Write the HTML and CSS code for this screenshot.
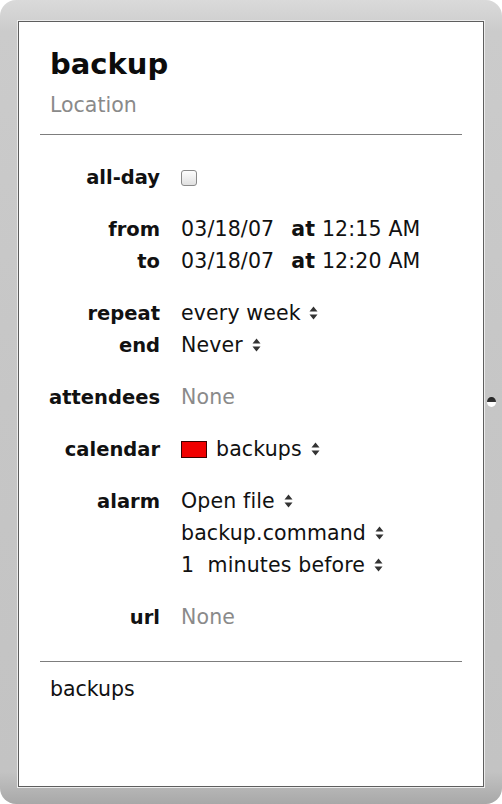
FILE: index.html
```html
<!DOCTYPE html>
<html>
<head>
<meta charset="utf-8">
<link rel="stylesheet" href="styles.css">
</head>
<body>
<div class="frame">
  <div class="panel">
    <div class="head">
      <div class="title">backup</div>
      <div class="location">Location</div>
    </div>
    <div class="rule"></div>
    <div class="form">
      <div class="group">
        <div class="row"><span class="label">all-day</span><span class="value"><span class="check"></span></span></div>
      </div>
      <div class="group">
        <div class="row"><span class="label">from</span><span class="value">03/18/07<span class="gap"></span><b>at</b> 12:15 AM</span></div>
        <div class="row"><span class="label">to</span><span class="value">03/18/07<span class="gap"></span><b>at</b> 12:20 AM</span></div>
      </div>
      <div class="group">
        <div class="row"><span class="label">repeat</span><span class="value">every week <svg class="ud" viewBox="0 0 9 14"><path d="M4.5 0.5 L8.5 5.5 L0.5 5.5 Z M4.5 13.5 L8.5 8.5 L0.5 8.5 Z"/></svg></span></div>
        <div class="row"><span class="label">end</span><span class="value">Never <svg class="ud" viewBox="0 0 9 14"><path d="M4.5 0.5 L8.5 5.5 L0.5 5.5 Z M4.5 13.5 L8.5 8.5 L0.5 8.5 Z"/></svg></span></div>
      </div>
      <div class="group">
        <div class="row"><span class="label">attendees</span><span class="value muted">None</span></div>
      </div>
      <div class="group">
        <div class="row"><span class="label">calendar</span><span class="value"><span class="swatch"></span>backups <svg class="ud" viewBox="0 0 9 14"><path d="M4.5 0.5 L8.5 5.5 L0.5 5.5 Z M4.5 13.5 L8.5 8.5 L0.5 8.5 Z"/></svg></span></div>
      </div>
      <div class="group">
        <div class="row"><span class="label">alarm</span><span class="value">Open file <svg class="ud" viewBox="0 0 9 14"><path d="M4.5 0.5 L8.5 5.5 L0.5 5.5 Z M4.5 13.5 L8.5 8.5 L0.5 8.5 Z"/></svg></span></div>
        <div class="row"><span class="label"></span><span class="value">backup.command <svg class="ud" viewBox="0 0 9 14"><path d="M4.5 0.5 L8.5 5.5 L0.5 5.5 Z M4.5 13.5 L8.5 8.5 L0.5 8.5 Z"/></svg></span></div>
        <div class="row"><span class="label"></span><span class="value">1&nbsp; minutes before <svg class="ud" viewBox="0 0 9 14"><path d="M4.5 0.5 L8.5 5.5 L0.5 5.5 Z M4.5 13.5 L8.5 8.5 L0.5 8.5 Z"/></svg></span></div>
      </div>
      <div class="group">
        <div class="row"><span class="label">url</span><span class="value muted">None</span></div>
      </div>
    </div>
    <div class="rule rule-bottom"></div>
    <div class="notes">backups</div>
  </div>
  <div class="knob"></div>
</div>
</body>
</html>
```

FILE: styles.css
```css
html, body {
  margin: 0;
  padding: 0;
  background: #ffffff;
}

body {
  font-family: "DejaVu Sans", "Liberation Sans", sans-serif;
  color: #111;
}

.frame {
  position: relative;
  box-sizing: border-box;
  width: 502px;
  height: 804px;
  border-radius: 16px;
  background: linear-gradient(to bottom, #dadada 0%, #cbcbcb 4%, #c6c6c6 50%, #c3c3c3 96%, #a8a8a8 100%);
  padding: 21px 18px 17px 18px;
  display: flex;
}

.panel {
  flex: 1;
  background: #fff;
  border: 1px solid #5e5e5e;
  box-shadow: 0 0 0 1px #ececec;
  display: flex;
  flex-direction: column;
}

.head {
  padding: 24px 0 0 31px;
}

.title {
  font-size: 29px;
  font-weight: bold;
  line-height: 36px;
  color: #0c0c0c;
}

.location {
  margin-top: 11px;
  font-size: 20.5px;
  line-height: 24px;
  color: #8a8a8a;
}

.rule {
  height: 1px;
  background: #7d7d7d;
  margin: 17px 21px 0 21px;
}

.form {
  padding-top: 26px;
  display: flex;
  flex-direction: column;
  gap: 20px;
}

.row {
  display: grid;
  grid-template-columns: 141px 1fr;
  column-gap: 21px;
  height: 32px;
  align-items: center;
  font-size: 20.5px;
}

.label {
  text-align: right;
  font-weight: bold;
  font-size: 19.5px;
  color: #111;
}

.value {
  display: flex;
  align-items: center;
  white-space: pre;
  letter-spacing: 0.15px;
}

.value b {
  font-weight: bold;
}

.gap {
  display: inline-block;
  width: 17px;
}

.muted {
  color: #8a8a8a;
}

.check {
  display: inline-block;
  width: 16px;
  height: 16px;
  box-sizing: border-box;
  border: 1px solid #8a8a8a;
  border-radius: 3px;
  background: linear-gradient(to bottom, #fdfdfd, #e0e0e0);
  margin-top: 1px;
}

.swatch {
  display: inline-block;
  width: 26px;
  height: 17px;
  box-sizing: border-box;
  background: #f00000;
  border: 1px solid #3a0000;
  margin-right: 9px;
}

.ud {
  width: 9px;
  height: 14px;
  margin-left: 2px;
  fill: #333;
}

.rule-bottom {
  margin-top: 28px;
}

.notes {
  padding: 15px 0 0 31px;
  font-size: 20.5px;
  line-height: 24px;
  color: #111;
}

.knob {
  position: absolute;
  left: 487px;
  top: 397px;
  width: 9px;
  height: 10px;
  border-radius: 50%;
  background: linear-gradient(to bottom, #222 0%, #333 45%, #fff 55%, #fff 100%);
}
```
